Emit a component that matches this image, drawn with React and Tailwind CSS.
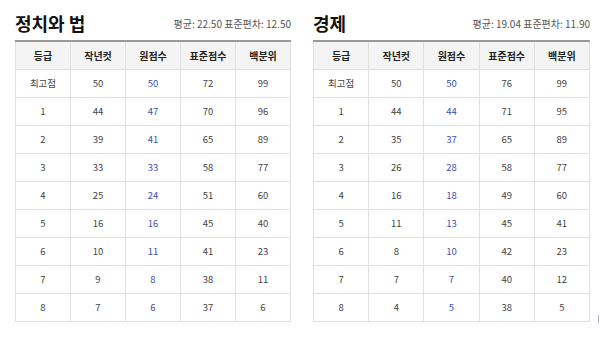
const tables = [
  {
    title: "정치와 법",
    stats: "평균: 22.50 표준편차: 12.50",
    width: "w-[276px]",
    rows: [
      ["최고점", 50, 50, 72, 99],
      [1, 44, 47, 70, 96],
      [2, 39, 41, 65, 89],
      [3, 33, 33, 58, 77],
      [4, 25, 24, 51, 60],
      [5, 16, 16, 45, 40],
      [6, 10, 11, 41, 23],
      [7, 9, 8, 38, 11],
      [8, 7, 6, 37, 6],
    ],
  },
  {
    title: "경제",
    stats: "평균: 19.04 표준편차: 11.90",
    width: "w-[277px]",
    rows: [
      ["최고점", 50, 50, 76, 99],
      [1, 44, 44, 71, 95],
      [2, 35, 37, 65, 89],
      [3, 26, 28, 58, 77],
      [4, 16, 18, 49, 60],
      [5, 11, 13, 45, 41],
      [6, 8, 10, 42, 23],
      [7, 7, 7, 40, 12],
      [8, 4, 5, 38, 5],
    ],
  },
];

const headers = ["등급", "작년컷", "원점수", "표준점수", "백분위"];

function ScoreTable({ title, stats, rows, width }) {
  return (
    <div className={width}>
      <div className="flex items-end justify-between h-[40px] pb-[8px]">
        <h2 className="text-[18px] font-bold text-[#111] leading-none">{title}</h2>
        <span className="text-[10px] text-[#555] leading-none mb-[3px]">{stats}</span>
      </div>
      <table className="w-full border-collapse table-fixed border-t-2 border-t-[#999]">
        <thead>
          <tr className="bg-[#f4f4f4] h-[28px]">
            {headers.map((h) => (
              <th key={h} className="border border-[#e0e0e0] border-t-0 text-[10px] font-bold text-[#222] p-0">
                {h}
              </th>
            ))}
          </tr>
        </thead>
        <tbody>
          {rows.map((r, i) => (
            <tr key={i} className="h-[28px]">
              {r.map((c, j) => (
                <td
                  key={j}
                  className={`border border-[#e0e0e0] text-center p-0 text-[9.5px] ${
                    j === 2 ? "text-[#3f4fb0]" : "text-[#444]"
                  }`}
                >
                  {c}
                </td>
              ))}
            </tr>
          ))}
        </tbody>
      </table>
    </div>
  );
}

export default function App() {
  return (
    <div
      className="relative w-[600px] h-[338px] bg-white overflow-hidden pl-[15px] flex gap-[22px]"
      style={{ fontFamily: '"Noto Sans CJK KR", "Noto Sans", sans-serif' }}
    >
      {tables.map((t) => (
        <ScoreTable key={t.title} {...t} />
      ))}
      <div className="absolute left-[598px] top-[315px] w-[1px] h-[8px] bg-[#b9a8d8]" />
    </div>
  );
}
